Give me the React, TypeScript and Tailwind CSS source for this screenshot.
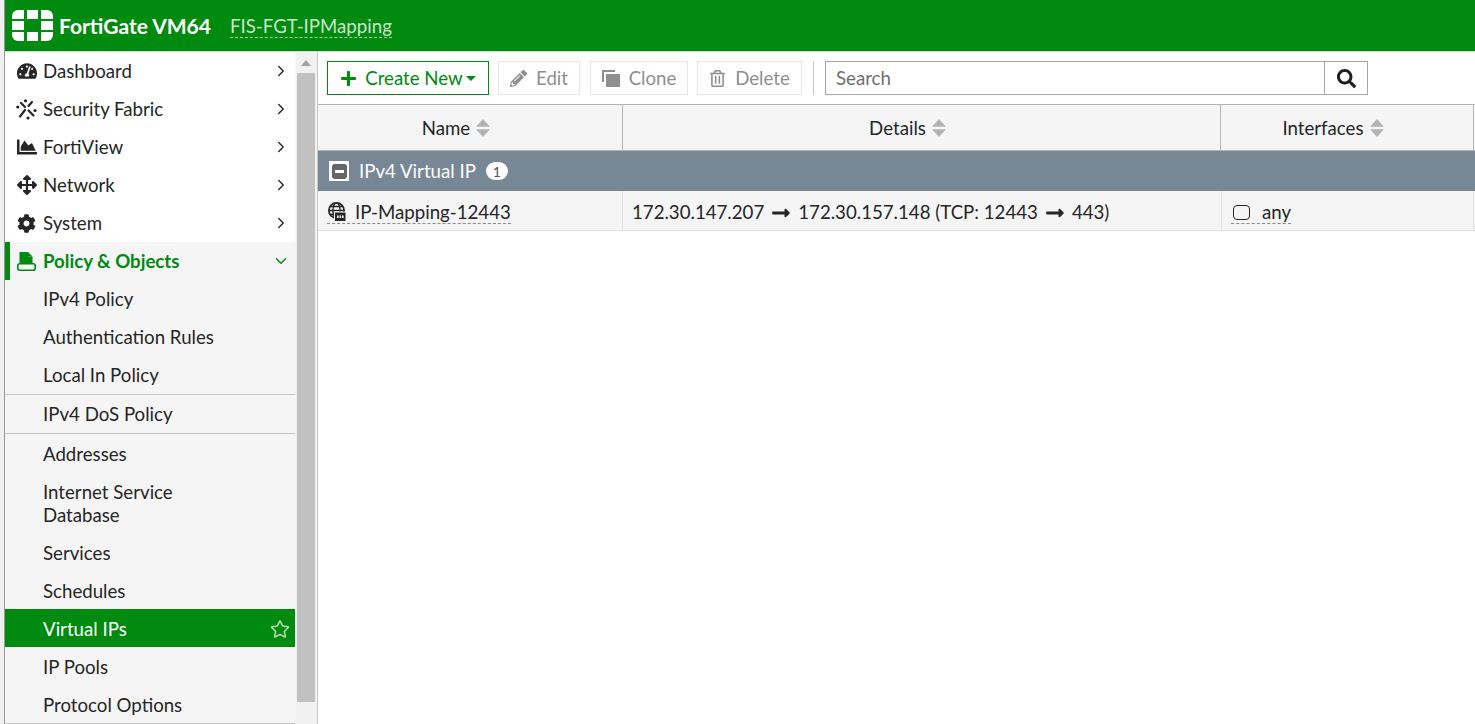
import React from "react";
import { FaTachometerAlt, FaChartArea, FaArrowsAlt, FaCog, FaPlus, FaPencilAlt, FaRegTrashAlt, FaSearch, FaRegStar, FaLongArrowAltRight } from "react-icons/fa";
import { ChevronRight, ChevronDown } from "lucide-react";

function Logo() {
  return (
    <svg width="41" height="31" viewBox="0 0 41 31" fill="#fff">
      <path d="M0 9V6a6 6 0 0 1 6-6h6v9z" />
      <rect x="15" y="0" width="11" height="9" />
      <path d="M29 0h6a6 6 0 0 1 6 6v3H29z" />
      <rect x="0" y="11" width="12" height="9" />
      <rect x="29" y="11" width="12" height="9" />
      <path d="M0 22h12v9H6a6 6 0 0 1-6-6z" />
      <rect x="15" y="22" width="11" height="9" />
      <path d="M29 22h12v3a6 6 0 0 1-6 6h-6z" />
    </svg>
  );
}

function Fabric() {
  return (
    <svg width="21" height="21" viewBox="0 0 21 21" fill="#262626">
      <g stroke="#262626" strokeWidth="2.2" fill="none" strokeLinecap="round">
        <path d="M16 3l-3.5 4M9 11l-5 6.5" />
        <path d="M5 4l4 4M12.5 11.5l5 5" />
      </g>
      <circle cx="1.8" cy="8" r="1.6" />
      <circle cx="19" cy="11.5" r="1.6" />
      <circle cx="9.5" cy="1.8" r="1.6" />
      <circle cx="12" cy="19" r="1.6" />
    </svg>
  );
}

function PolicyIcon() {
  return (
    <svg width="19" height="19" viewBox="0 0 19 19" fill="#008a10">
      <path d="M2.5 0h8.5l4.5 4.5V11H5a3 3 0 0 0-2.5 1.5z" />
      <path d="M11 0v4.5h4.5V0z" fill="#f5f5f5" />
      <path d="M11 0l4.5 4.5H11z" fill="#008a10" />
      <rect x="0.8" y="11.8" width="17.4" height="6.4" rx="2" fill="#f5f5f5" stroke="#008a10" strokeWidth="1.6" />
    </svg>
  );
}

function CloneIcon() {
  return (
    <svg width="18" height="17" viewBox="0 0 18 17" fill="#8f8f8f">
      <path d="M0 0h13v2H2v10H0z" />
      <rect x="4" y="4" width="14" height="13" />
    </svg>
  );
}

function VipIcon() {
  return (
    <svg width="20" height="20" viewBox="0 0 20 20">
      <circle cx="9.5" cy="8.5" r="7.6" fill="none" stroke="#262626" strokeWidth="1.8" />
      <path d="M2 8.5h15M3.5 4.5h12M3.5 12.5h12" stroke="#262626" strokeWidth="1.4" />
      <ellipse cx="9.5" cy="8.5" rx="3.6" ry="7.6" fill="none" stroke="#262626" strokeWidth="1.4" />
      <rect x="7.5" y="10" width="11.5" height="9.5" rx="1" fill="#262626" stroke="#f5f5f5" strokeWidth="1" />
      <path d="M10 13.5h1.6v2.5H10zM12.5 13.5h1.6v2.5h-1.6zM15 13.5h1.6v2.5H15z" fill="#f5f5f5" />
    </svg>
  );
}

function Sort() {
  return (
    <svg width="14" height="18" viewBox="0 0 14 18" fill="#b3b3b3" className="ml-[6px] shrink-0">
      <path d="M7 0l7 7.8H0z" />
      <path d="M0 10.2h14L7 18z" />
    </svg>
  );
}

function TopItem({ icon, label }: { icon: React.ReactNode; label: string }) {
  return (
    <div className="h-[38px] flex items-center pl-[11px] pr-[5px] bg-white">
      <span className="w-[21px] flex justify-center shrink-0">{icon}</span>
      <span className="ml-[6px] flex-1">{label}</span>
      <ChevronRight size={18} strokeWidth={1.8} className="text-[#262626]" />
    </div>
  );
}

function SubItem({ label }: { label: string }) {
  return <div className="h-[38px] flex items-center pl-[38px]">{label}</div>;
}

function ToolButton({ icon, label, w }: { icon: React.ReactNode; label: string; w: string }) {
  return (
    <div className={`h-[34px] ${w} border border-[#e6e6e6] flex items-center justify-center gap-[9px] text-[#8f8f8f]`}>
      {icon}
      <span>{label}</span>
    </div>
  );
}

function Arrow() {
  return <FaLongArrowAltRight className="inline-block mx-[7px] text-[#262626] text-[20px] align-[-4px]" />;
}

export default function App() {
  return (
    <div className="w-[1475px] h-[724px] overflow-hidden flex bg-white text-[#262626] text-[18.67px] font-['Lato','Liberation_Sans',sans-serif]">
      <div className="w-[5px] shrink-0 bg-[#f0f0f0] border-r border-[#9a9a9a]" />
      <div className="flex-1 min-w-0 flex flex-col">
        <header className="h-[51px] shrink-0 bg-[#008a10] flex items-center pl-[7px] text-white">
          <Logo />
          <span className="ml-[6px] text-[21px] font-bold">FortiGate VM64</span>
          <span className="ml-[19px] text-[#c9e6c9] border-b border-dashed border-[#a9c9a9] leading-[21px] mt-[2px]">FIS-FGT-IPMapping</span>
        </header>
        <div className="flex-1 min-h-0 flex border-t border-[#d9d9d9]">
          <nav className="w-[291px] shrink-0 bg-[#f5f5f5] overflow-hidden">
            <div className="w-[290px]">
              <TopItem icon={<FaTachometerAlt size={20} />} label="Dashboard" />
              <TopItem icon={<Fabric />} label="Security Fabric" />
              <TopItem icon={<FaChartArea size={20} />} label="FortiView" />
              <TopItem icon={<FaArrowsAlt size={20} />} label="Network" />
              <TopItem icon={<FaCog size={19} />} label="System" />
              <div className="h-[38px] flex items-center border-l-[5px] border-[#008a10] pl-[6px] pr-[5px] text-[#008a10] font-bold">
                <span className="w-[21px] flex justify-center shrink-0"><PolicyIcon /></span>
                <span className="ml-[6px] flex-1">Policy &amp; Objects</span>
                <ChevronDown size={18} strokeWidth={1.8} />
              </div>
              <SubItem label="IPv4 Policy" />
              <SubItem label="Authentication Rules" />
              <SubItem label="Local In Policy" />
              <div className="border-t border-[#c4c4c4]"><SubItem label="IPv4 DoS Policy" /></div>
              <div className="border-t border-[#c4c4c4] pt-[1px]"><SubItem label="Addresses" /></div>
              <div className="pl-[38px] pt-[8px] pb-[7px] leading-[23px]">Internet Service<br />Database</div>
              <SubItem label="Services" />
              <div className="h-[37px] flex items-center pl-[38px] pt-[1px]">Schedules</div>
              <div className="h-[38px] flex items-center justify-between pl-[38px] pr-[5px] pt-[1px] bg-[#008a10] text-white">
                <span>Virtual IPs</span>
                <FaRegStar size={20} className="text-[#a5d6a5]" />
              </div>
              <div className="h-[38px] flex items-center pl-[38px] pt-[1px]">IP Pools</div>
              <div className="h-[38px] flex items-center pl-[38px] pt-[1px]">Protocol Options</div>
              <div className="border-t border-[#c4c4c4]" />
            </div>
          </nav>
          <div className="w-[21px] shrink-0 bg-[#f1f1f1] pl-[1px] pr-[2px] flex flex-col items-stretch">
            <div className="h-[21px] flex items-center justify-center">
              <div className="w-0 h-0 border-l-[5px] border-r-[5px] border-b-[6px] border-l-transparent border-r-transparent border-b-[#a3a3a3]" />
            </div>
            <div className="h-[629px] bg-[#c1c1c1] w-[18px]" />
          </div>
          <main className="flex-1 min-w-0 border-l border-[#c8c8c8] flex flex-col">
            <div className="h-[52px] shrink-0 flex items-center pl-[9px]">
              <div className="h-[34px] w-[162px] border border-[#008a10] flex items-center justify-center text-[#008a10]">
                <FaPlus size={17} className="mr-[8px]" />
                <span>Create New</span>
                <span className="ml-[3px] w-0 h-0 border-l-[5px] border-r-[5px] border-t-[5px] border-l-transparent border-r-transparent border-t-[#008a10]" />
              </div>
              <div className="ml-[9px]"><ToolButton w="w-[82px]" icon={<FaPencilAlt size={17} />} label="Edit" /></div>
              <div className="ml-[10px]"><ToolButton w="w-[98px]" icon={<CloneIcon />} label="Clone" /></div>
              <div className="ml-[9px]"><ToolButton w="w-[105px]" icon={<FaRegTrashAlt size={17} />} label="Delete" /></div>
              <div className="ml-[11px] w-px h-[34px] bg-[#c8c8c8]" />
              <div className="ml-[11px] w-[543px] h-[34px] border border-[#a6a6a6] flex">
                <div className="flex-1 pl-[10px] flex items-center text-[#6f6f6f]">Search</div>
                <div className="w-[43px] border-l border-[#a6a6a6] flex items-center justify-center text-[#1f1f1f]"><FaSearch size={19} /></div>
              </div>
            </div>
            <div className="h-[47px] shrink-0 flex bg-[#f5f5f5] border-t border-b border-[#b5b5b5]">
              <div className="w-[305px] border-r border-[#b5b5b5] flex items-center justify-center pr-[28px]">Name<Sort /></div>
              <div className="w-[598px] border-r border-[#b5b5b5] flex items-center justify-center pr-[28px]">Details<Sort /></div>
              <div className="w-[253px] border-r border-[#b5b5b5] flex items-center justify-center pr-[28px]">Interfaces<Sort /></div>
            </div>
            <div className="h-[40px] shrink-0 bg-[#778796] flex items-center pl-[11px] text-white">
              <span className="w-[20px] h-[20px] bg-white flex items-center justify-center">
                <span className="w-[15px] h-[15px] rounded-[3px] bg-[#666] flex items-center justify-center">
                  <span className="w-[9px] h-[3px] bg-white" />
                </span>
              </span>
              <span className="ml-[10px]">IPv4 Virtual IP</span>
              <span className="ml-[10px] w-[22px] h-[18px] rounded-full bg-white text-[#555] text-[14px] flex items-center justify-center">1</span>
            </div>
            <div className="h-[40px] shrink-0 flex bg-[#f5f5f5] border-b border-[#e2e2e2]">
              <div className="w-[305px] border-r border-[#e2e2e2] flex items-center pl-[9px]">
                <span className="flex items-center border-b border-dashed border-[#8a8a8a] leading-[21px] mt-[4px]">
                  <VipIcon />
                  <span className="ml-[8px]">IP-Mapping-12443</span>
                </span>
              </div>
              <div className="w-[599px] border-r border-[#e2e2e2] flex items-center pl-[9px] pt-[2px]">
                <span>172.30.147.207<Arrow />172.30.157.148 (TCP: 12443<Arrow />443)</span>
              </div>
              <div className="w-[252px] border-r border-[#e2e2e2] flex items-center pl-[9px]">
                <span className="flex items-center border-b border-dashed border-[#8a8a8a] leading-[21px] mt-[4px]">
                  <span className="ml-[2px] w-[17px] h-[15px] rounded-[4px] border-[1.5px] border-[#262626]" />
                  <span className="ml-[12px]">any</span>
                </span>
              </div>
            </div>
          </main>
        </div>
      </div>
    </div>
  );
}
